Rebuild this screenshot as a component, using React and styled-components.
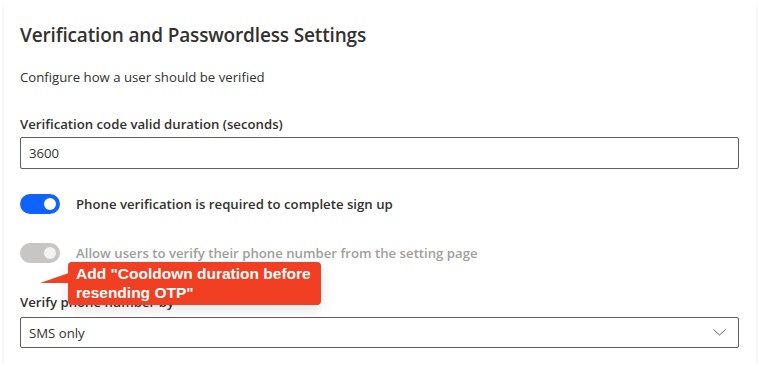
import styled, { createGlobalStyle } from "styled-components"

const GlobalStyle = createGlobalStyle`
  body {
    margin: 0;
    background: #ffffff;
    font-family: "Open Sans", "Noto Sans", sans-serif;
    color: #323130;
  }
`

const Page = styled.div`
  position: relative;
  padding: 4px 11px 0 4px;
`

const Card = styled.section`
  display: flex;
  flex-direction: column;
  padding: 17px 17px 16px 16px;
  background: #ffffff;
  box-shadow: 0 0.3px 1px rgba(0, 0, 0, 0.13), 0 1.6px 3.6px rgba(0, 0, 0, 0.08);
`

const Title = styled.h2`
  margin: 0;
  font-size: 19px;
  line-height: 28px;
  font-weight: 600;
  letter-spacing: -0.15px;
`

const Description = styled.p`
  margin: 18px 0 0;
  font-size: 13.2px;
  line-height: 20px;
`

const Label = styled.label`
  display: block;
  margin-top: ${(p) => p.$top}px;
  font-size: 13.2px;
  line-height: 20px;
  font-weight: 600;
`

const Field = styled.div`
  display: flex;
  align-items: center;
  justify-content: space-between;
  margin-top: ${(p) => p.$top || 3}px;
  height: ${(p) => p.$height}px;
  box-sizing: border-box;
  padding: 0 12px 0 8px;
  border: 1px solid #605e5c;
  border-radius: 2px;
  font-size: 13.2px;
`

const ToggleRow = styled.div`
  display: flex;
  align-items: center;
  gap: 16px;
  margin-top: ${(p) => p.$top}px;
  height: 20px;
  font-size: 13.2px;
  font-weight: 600;
  color: ${(p) => (p.$disabled ? "#a19f9d" : "#323130")};
`

const Track = styled.span`
  position: relative;
  flex: none;
  width: 40px;
  height: 20px;
  border-radius: 10px;
  background: ${(p) => (p.$on ? "#0f62fe" : "#c8c6c4")};
`

const Knob = styled.span`
  position: absolute;
  top: 4px;
  right: 4px;
  width: 12px;
  height: 12px;
  border-radius: 50%;
  background: ${(p) => (p.$on ? "#ffffff" : "#f3f2f1")};
`

const Callout = styled.div`
  position: absolute;
  left: 68px;
  top: 262px;
  width: 253px;
  box-sizing: border-box;
  padding: 3px 8px 3px;
  background: #f03f22;
  border-radius: 4px;
  color: #ffffff;
  font-family: "Liberation Sans", Arial, sans-serif;
  font-weight: 700;
  font-size: 15.5px;
  line-height: 18.5px;
  white-space: nowrap;
  box-shadow: 0 4px 14px rgba(0, 0, 0, 0.12);
`

const Pointer = styled.svg`
  position: absolute;
  left: -28px;
  top: 9px;
`

function Toggle({ on }) {
  return (
    <Track $on={on}>
      <Knob $on={on} />
    </Track>
  )
}

export default function App() {
  return (
    <Page>
      <GlobalStyle />
      <Card>
        <Title>Verification and Passwordless Settings</Title>
        <Description>Configure how a user should be verified</Description>

        <Label $top={27}>Verification code valid duration (seconds)</Label>
        <Field $height={32}>3600</Field>

        <ToggleRow $top={25}>
          <Toggle on />
          Phone verification is required to complete sign up
        </ToggleRow>

        <ToggleRow $top={29} $disabled>
          <Toggle />
          Allow users to verify their phone number from the setting page
        </ToggleRow>

        <Label $top={29}>Verify phone number by</Label>
        <Field $top={5} $height={31}>
          SMS only
          <svg width="13" height="7" viewBox="0 0 13 7">
            <path d="M0.5 0.5 L6.5 6 L12.5 0.5" fill="none" stroke="#605e5c" strokeWidth="1" />
          </svg>
        </Field>
      </Card>

      <Callout>
        <Pointer width="29" height="16" viewBox="0 0 29 16">
          <polygon points="0,12 29,2 29,12" fill="#f03f22" />
        </Pointer>
        Add "Cooldown duration before
        <br />
        resending OTP"
      </Callout>
    </Page>
  )
}
